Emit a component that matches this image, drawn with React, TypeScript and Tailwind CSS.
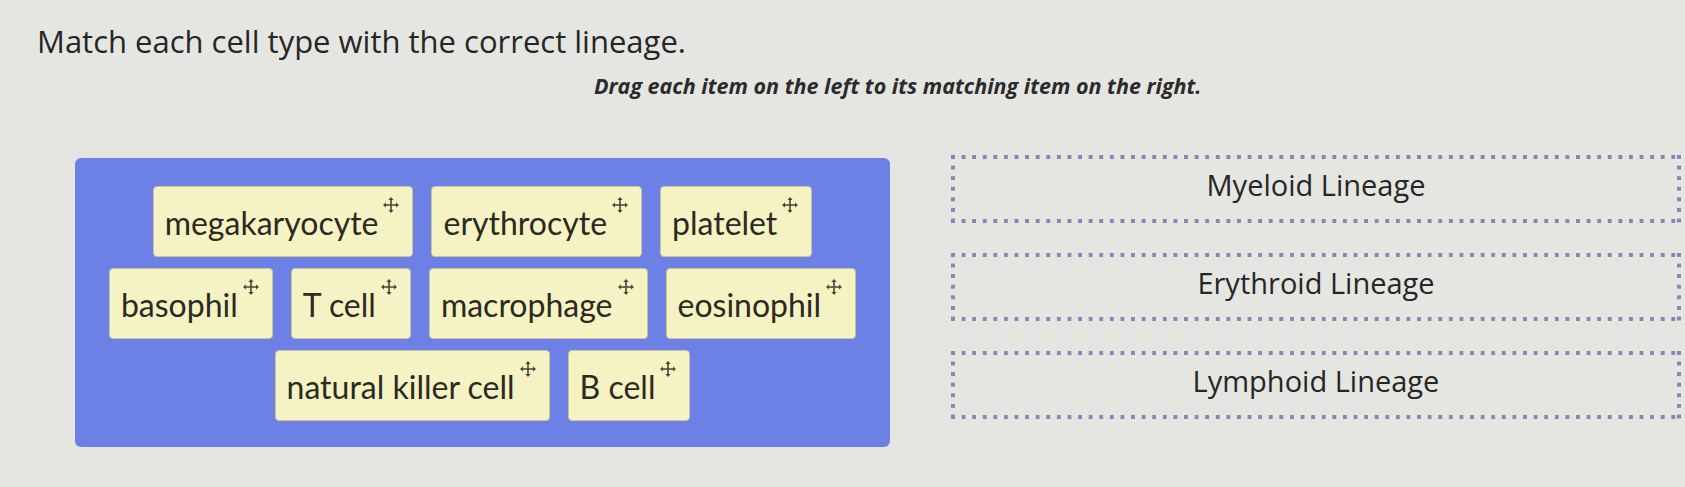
import React from "react";

const rows: string[][] = [
  ["megakaryocyte", "erythrocyte", "platelet"],
  ["basophil", "T cell", "macrophage", "eosinophil"],
  ["natural killer cell", "B cell"],
];

const lineages = ["Myeloid Lineage", "Erythroid Lineage", "Lymphoid Lineage"];

function MoveIcon() {
  return (
    <svg width="16" height="16" viewBox="0 0 16 16" className="shrink-0 text-[#46463a]">
      <path d="M8 2.5v11M2.5 8h11" stroke="currentColor" strokeWidth="1.6" />
      <path d="M8 0l2.6 3H5.4zM8 16l2.6-3H5.4zM0 8l3-2.6v5.2zM16 8l-3-2.6v5.2z" fill="currentColor" />
    </svg>
  );
}

function Chip({ label }: { label: string }) {
  return (
    <div className="flex h-[71px] items-center rounded-[4px] border border-[#c9c59a] bg-[#f5f2c3] pl-[11px] pr-[13px]">
      <span className="mt-[2px] font-['Lato',sans-serif] text-[32px] leading-[40px] text-[#2a2a22]">{label}</span>
      <span className="mb-[34px] ml-[5px]">
        <MoveIcon />
      </span>
    </div>
  );
}

// square-dotted drop zone outline
const dropZone =
  "[background-image:linear-gradient(to_right,#8486b8_4px,transparent_4px),linear-gradient(to_right,#8486b8_4px,transparent_4px),linear-gradient(to_bottom,#8486b8_4px,transparent_4px),linear-gradient(to_bottom,#8486b8_4px,transparent_4px)] [background-size:10.6px_4px,10.6px_4px,4px_10.6px,4px_10.6px] [background-position:0_0,0_100%,0_0,100%_0] [background-repeat:repeat-x,repeat-x,repeat-y,repeat-y]";

export default function App() {
  return (
    <div className="h-[487px] w-[1685px] overflow-hidden bg-[#e5e5e2] font-['Open_Sans',sans-serif] text-[#262626]">
      <h1 className="pl-[37px] pt-[20px] text-[31px] leading-[42px]">Match each cell type with the correct lineage.</h1>
      <p className="ml-[594px] mt-[10px] text-[21.5px] font-bold italic leading-[28px] text-[#2b2b2b]">
        Drag each item on the left to its matching item on the right.
      </p>

      <div className="mt-[58px] flex items-start">
        <div className="ml-[75px] flex h-[289px] w-[815px] shrink-0 flex-col items-center gap-[11px] rounded-[6px] bg-[#6c80e6] pt-[28px]">
          {rows.map((row, i) => (
            <div key={i} className="flex justify-center gap-[18px]">
              {row.map((label) => (
                <Chip key={label} label={label} />
              ))}
            </div>
          ))}
        </div>

        <div className="-mt-[3px] ml-[61px] flex w-[730px] shrink-0 flex-col gap-[30px]">
          {lineages.map((l) => (
            <div key={l} className={`flex h-[68px] shrink-0 items-center justify-center ${dropZone}`}>
              <span className="-mt-[8px] text-[29px] leading-[40px] text-[#262626]">{l}</span>
            </div>
          ))}
        </div>
      </div>
    </div>
  );
}
